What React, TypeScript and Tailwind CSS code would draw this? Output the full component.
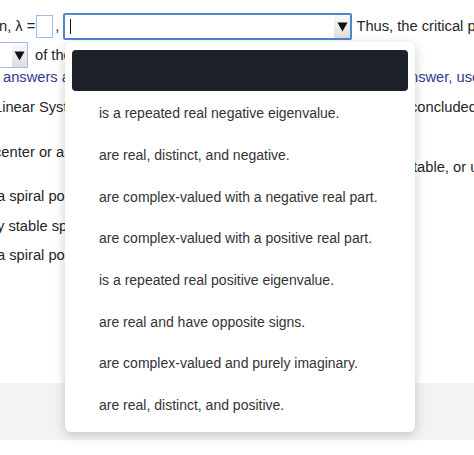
const options = [
  "is a repeated real negative eigenvalue.",
  "are real, distinct, and negative.",
  "are complex-valued with a negative real part.",
  "are complex-valued with a positive real part.",
  "is a repeated real positive eigenvalue.",
  "are real and have opposite signs.",
  "are complex-valued and purely imaginary.",
  "are real, distinct, and positive.",
];

function Arrow({ className }: { className: string }) {
  return (
    <div
      className={`flex shrink-0 items-center justify-center bg-gradient-to-b from-[#fafafa] to-[#dedede] ${className}`}
    >
      <svg width="11" height="11" viewBox="0 0 11 11">
        <path d="M0.5 1.5 H10.5 L5.5 10.5 Z" fill="#111" />
      </svg>
    </div>
  );
}

function Row({
  left,
  right,
  className,
  leftClass = "",
  leftBlue,
  rightBlue,
}: {
  left?: string;
  right?: string;
  className: string;
  leftClass?: string;
  leftBlue?: boolean;
  rightBlue?: boolean;
}) {
  return (
    <div className={`flex whitespace-nowrap ${className}`}>
      <div className={`w-[410px] shrink-0 overflow-hidden ${leftBlue ? "text-[#2f3b8e]" : ""}`}>
        <div className={leftClass}>{left}</div>
      </div>
      <div className={rightBlue ? "text-[#2f3b8e]" : ""}>{right}</div>
    </div>
  );
}

export default function App() {
  return (
    <div className="relative w-[474px] h-[455px] overflow-hidden bg-white font-['Liberation_Sans',Arial,sans-serif] text-[14.7px] text-[#262626]">
      <div className="h-[383px] flex flex-col">
        {/* row 1 */}
        <div className="mt-[13px] h-[27px] flex items-center whitespace-nowrap">
          <span className="-ml-[1px] shrink-0">n, λ =</span>
          <div className="ml-[1px] w-[17px] h-[23px] shrink-0 border border-[#9dbde3] bg-white" />
          <span className="ml-[2px] shrink-0">,</span>
          <div className="ml-[4px] w-[289px] h-[27px] shrink-0 flex border-2 border-[#4c86cc] rounded-[2px] bg-white">
            <div className="flex-1 flex items-center pl-[5px]">
              <div className="w-[1px] h-[15px] bg-[#111]" />
            </div>
            <Arrow className="w-[16px] h-full" />
          </div>
          <span className="ml-[4px]">Thus, the critical point</span>
        </div>
        {/* row 2 */}
        <div className="mt-[2px] h-[26px] flex items-center whitespace-nowrap">
          <div className="-ml-[2px] w-[30px] h-[26px] shrink-0 flex border border-[#9dbde3] bg-white">
            <div className="flex-1" />
            <Arrow className="w-[15px] h-full" />
          </div>
          <span className="ml-[7px]">of the system.</span>
        </div>
        <Row
          className="h-[20px] leading-[20px] -mt-[1px]"
          leftClass="pl-[3px]"
          left="answers as needed."
          right="nswer, use"
          leftBlue
          rightBlue
        />
        <Row
          className="mt-[10px] h-[20px] leading-[20px]"
          leftClass="-ml-[6px]"
          left="Linear Systems it can be"
          right="concluded"
        />
        <div className="mt-[25px] h-[35px] flex whitespace-nowrap leading-[20px]">
          <div className="w-[413px] shrink-0 overflow-hidden">
            <div className="-ml-[6px]">center or a saddle</div>
          </div>
          <div className="self-end">table, or unstable</div>
        </div>
        <Row className="mt-[9px] h-[20px] leading-[20px]" leftClass="-ml-[3px]" left="a spiral point" />
        <Row className="mt-[10px] h-[20px] leading-[20px]" leftClass="-ml-[3px]" left="y stable spiral" />
        <Row className="mt-[9px] h-[20px] leading-[20px]" leftClass="-ml-[3px]" left="a spiral point" />
      </div>
      <div className="h-[57px] bg-[#f3f3f3]" />

      {/* dropdown list */}
      <div className="absolute left-[65px] top-[42px] w-[350px] h-[390px] bg-white rounded-[6px] shadow-[0_3px_12px_rgba(0,0,0,0.2)] px-[7px] pt-[8px]">
        <div className="h-[41px] rounded-[4px] bg-[#1d222a]" />
        <div className="mt-[2px] flex flex-col">
          {options.map((o) => (
            <div
              key={o}
              className="h-[41.7px] flex items-center pl-[27px] text-[14px] text-[#333] whitespace-nowrap"
            >
              {o}
            </div>
          ))}
        </div>
      </div>
    </div>
  );
}
